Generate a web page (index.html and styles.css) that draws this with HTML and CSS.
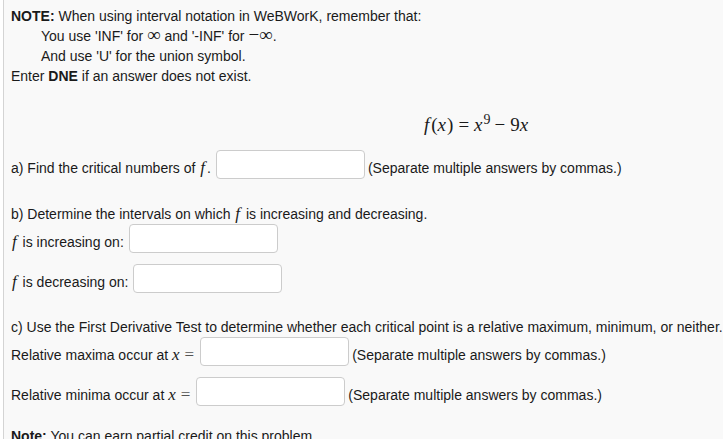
FILE: index.html
```html
<!DOCTYPE html>
<html>

<head>
    <title>WeBWorK Problem</title>
    <link rel="stylesheet" href="styles.css">
</head>

<body>
    <div class="problem">
        <div class="line"><b>NOTE:</b> When using interval notation in WeBWorK, remember that:</div>
        <div class="line indent">You use 'INF' for <span class="mathSym">&infin;</span> and '-INF' for <span class="mathSym">&minus;&infin;</span>.</div>
        <div class="line indent">And use 'U' for the union symbol.</div>
        <div class="line">Enter <b>DNE</b> if an answer does not exist.</div>

        <div class="display">
            <span class="mi">f</span><span class="mo">(</span><span class="mi">x</span><span class="mo">)</span><span class="mo rel">=</span><span class="mi">x</span><sup class="sup">9</sup><span class="mo bin">&minus;</span><span class="mn">9</span><span class="mi">x</span>
        </div>

        <div class="row rowA">
            <span class="label">a) Find the critical numbers of <span class="mi fn">f</span>.</span>
            <input class="answer" type="text">
            <span class="hint">(Separate multiple answers by commas.)</span>
        </div>

        <div class="line partB">b) Determine the intervals on which <span class="mi fn">f</span> is increasing and decreasing.</div>
        <div class="row">
            <span class="label"><span class="mi fn">f</span> is increasing on:</span>
            <input class="answer" type="text">
        </div>
        <div class="row rowGap">
            <span class="label"><span class="mi fn">f</span> is decreasing on:</span>
            <input class="answer" type="text">
        </div>

        <div class="line partC">c) Use the First Derivative Test to determine whether each critical point is a relative maximum, minimum, or neither.</div>
        <div class="row">
            <span class="label">Relative maxima occur at <span class="mi">x</span><span class="mo eq">=</span></span>
            <input class="answer" type="text">
            <span class="hint">(Separate multiple answers by commas.)</span>
        </div>
        <div class="row rowGap">
            <span class="label">Relative minima occur at <span class="mi">x</span><span class="mo eq">=</span></span>
            <input class="answer" type="text">
            <span class="hint">(Separate multiple answers by commas.)</span>
        </div>

        <div class="line footNote"><b>Note:</b> You can earn partial credit on this problem.</div>
    </div>
</body>

</html>
```

FILE: styles.css
```css
body {
    margin: 0;
    background-color: #ffffff;
    font-family: "Liberation Sans", Arial, sans-serif;
    font-size: 14px;
    color: #1a1a1a;
}

.problem {
    margin-left: 3px;
    padding: 6px 0 0 7px;
    border-left: 1px solid #d4d4d4;
    background-color: #f9f9f9;
    height: 433px;
    overflow: hidden;
    white-space: nowrap;
}

.line {
    line-height: 20px;
}

.indent {
    padding-left: 30px;
}

.mathSym {
    font-family: "Liberation Serif", serif;
    font-size: 19px;
    line-height: 0;
}

.mi {
    font-family: "Liberation Serif", serif;
    font-style: italic;
    font-size: 17px;
}

.mi.fn {
    margin: 0 2px 0 1px;
}

.mo,
.mn {
    font-family: "Liberation Serif", serif;
    font-size: 17px;
}

.display {
    display: flex;
    align-items: baseline;
    margin-top: 27px;
    padding-left: 412px;
    line-height: 24px;
}

.display .mi,
.display .mo,
.display .mn {
    font-size: 19px;
}

.display .mi {
    margin-right: 1px;
}

.display .mi:first-child {
    margin: 0 2px 0 1px;
}

.display .rel {
    margin: 0 5px;
}

.display .bin {
    margin: 0 5px 0 4px;
}

.sup {
    font-family: "Liberation Serif", serif;
    font-size: 14px;
    position: relative;
    top: -7px;
    line-height: 0;
}

.eq {
    margin: 0 1px 0 5px;
    color: #555555;
}

.row {
    display: flex;
    align-items: center;
    height: 29px;
}

.rowA {
    margin-top: 13px;
}

.rowGap {
    margin-top: 11px;
}

.label {
    padding-top: 6px;
}

.answer {
    box-sizing: border-box;
    width: 149px;
    height: 29px;
    margin: 0 3px 0 5px;
    padding: 4px 6px;
    border: 1px solid #cccccc;
    border-radius: 4px;
    background-color: #ffffff;
}

.hint {
    padding-top: 6px;
}

.partB {
    margin-top: 25px;
}

.partC {
    margin-top: 24px;
}

.footNote {
    margin-top: 20px;
}
```
